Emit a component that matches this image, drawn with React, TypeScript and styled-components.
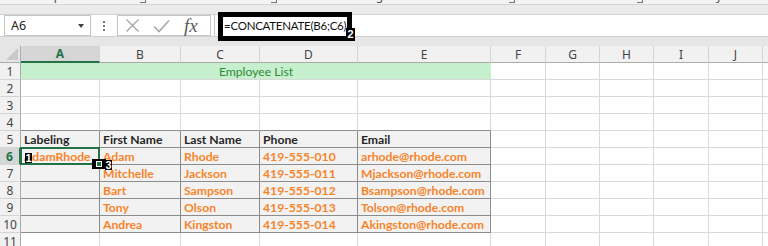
import styled, { createGlobalStyle, css } from 'styled-components'

const GlobalStyle = createGlobalStyle`
  html, body {
    margin: 0;
    padding: 0;
    background: #ffffff;
    overflow: hidden;
  }
  #root {
    width: 768px;
    height: 246px;
    overflow: hidden;
  }
`

const COLUMNS = ['A', 'B', 'C', 'D', 'E', 'F', 'G', 'H', 'I', 'J', '']
const GRID_TEMPLATE = '21px 79px 81px 79px 98px 133px 55px 54px 54px 55px 54px 1fr'

const Sheet = styled.div`
  width: 768px;
  height: 246px;
  display: flex;
  flex-direction: column;
  font-family: 'Noto Sans', 'Open Sans', sans-serif;
  background: #ffffff;
`

const RibbonStrip = styled.div`
  height: 4px;
  flex: none;
  display: flex;
  overflow: hidden;
  background: #f3f3f3;
  border-bottom: 1px solid #d5d5d5;
`

const GroupLabel = styled.div<{ $left: number }>`
  margin-left: ${(p) => p.$left}px;
  margin-top: -12px;
  height: 16px;
  line-height: 16px;
  font-size: 12px;
  color: #505050;
  white-space: nowrap;
`

const Launcher = styled.div<{ $left: number }>`
  margin-left: ${(p) => p.$left}px;
  margin-top: -1px;
  width: 5px;
  height: 3px;
  border-right: 1px solid #777;
  border-bottom: 1px solid #777;
  flex: none;
`

const RibbonEdge = styled.div`
  height: 9px;
  flex: none;
  background: #ebebeb;
  border-bottom: 1px solid #d0d0d0;
`

const FormulaBar = styled.div`
  position: relative;
  height: 21px;
  flex: none;
  display: flex;
  align-items: stretch;
  background: #ffffff;
  border-bottom: 1px solid #d0d0d0;
`

const NameBox = styled.div`
  margin-left: 4px;
  width: 87px;
  box-sizing: border-box;
  border: 1px solid #c6c6c6;
  display: flex;
  align-items: center;
  justify-content: space-between;
  padding: 0 6px 0 6px;
  font-size: 12.5px;
  color: #222;
`

const Caret = styled.span`
  width: 0;
  height: 0;
  border-left: 3px solid transparent;
  border-right: 3px solid transparent;
  border-top: 4px solid #444;
`

const Grip = styled.div`
  width: 26px;
  display: flex;
  flex-direction: column;
  align-items: center;
  justify-content: center;
  gap: 2px;
  span {
    width: 2px;
    height: 2px;
    background: #7a7a7a;
  }
`

const ButtonBox = styled.div`
  width: 94px;
  box-sizing: border-box;
  border: 1px solid #c6c6c6;
  display: flex;
  align-items: center;
  padding-left: 7px;
  gap: 13px;
`

const FxGlyph = styled.span`
  font-family: 'Liberation Serif', 'DejaVu Serif', serif;
  font-style: italic;
  font-size: 19px;
  color: #5a5a5a;
  line-height: 19px;
  margin-left: 1px;
`

const FormulaInput = styled.div`
  flex: 1;
  margin-left: 3px;
  box-sizing: border-box;
  border-left: 1px solid #c6c6c6;
  display: flex;
  align-items: center;
  padding-left: 9px;
  font-family: Lato, 'Noto Sans', sans-serif;
  font-size: 11.5px;
  letter-spacing: -0.25px;
  color: #111;
`

const FormulaHighlight = styled.div`
  position: absolute;
  left: 218px;
  top: -3px;
  width: 134px;
  height: 29px;
  box-sizing: border-box;
  border: 5px solid #000;
  pointer-events: none;
`

const Marker = styled.div<{ $left: number; $top: number; $w: number; $h: number }>`
  position: absolute;
  left: ${(p) => p.$left}px;
  top: ${(p) => p.$top}px;
  width: ${(p) => p.$w}px;
  height: ${(p) => p.$h}px;
  background: #000;
  color: #fff;
  font-family: 'Liberation Sans', Arial, sans-serif;
  font-weight: bold;
  font-size: 11px;
  line-height: ${(p) => p.$h}px;
  text-align: center;
  z-index: 3;
`

const HeaderGap = styled.div`
  height: 9px;
  flex: none;
  background: #e6e6e6;
`

const Grid = styled.div`
  display: grid;
  grid-template-columns: ${GRID_TEMPLATE};
  grid-auto-rows: 17px;
  flex: 1;
  overflow: hidden;
`

const Corner = styled.div`
  background: #e6e6e6;
  box-sizing: border-box;
  border-right: 1px solid #ababab;
  border-bottom: 1px solid #ababab;
  display: flex;
  align-items: flex-end;
  justify-content: flex-end;
  padding: 0 2px 2px 0;
`

const ColHeader = styled.div<{ $active?: boolean }>`
  box-sizing: border-box;
  background: ${(p) => (p.$active ? '#d6d6d6' : '#f1f1f1')};
  border-right: 1px solid #d4d4d4;
  border-bottom: ${(p) => (p.$active ? '2px solid #217346' : '1px solid #ababab')};
  display: flex;
  align-items: center;
  justify-content: center;
  font-size: 12px;
  color: ${(p) => (p.$active ? '#217346' : '#444')};
  font-weight: ${(p) => (p.$active ? 700 : 400)};
`

const RowHeader = styled.div<{ $active?: boolean }>`
  box-sizing: border-box;
  background: ${(p) => (p.$active ? '#d6d6d6' : '#f1f1f1')};
  border-right: ${(p) => (p.$active ? '2px solid #217346' : '1px solid #ababab')};
  border-bottom: 1px solid #d4d4d4;
  display: flex;
  align-items: center;
  justify-content: center;
  font-size: 12px;
  color: ${(p) => (p.$active ? '#217346' : '#444')};
  font-weight: ${(p) => (p.$active ? 700 : 400)};
`

type Tone = 'plain' | 'head' | 'data'

const Cell = styled.div<{ $table?: boolean; $tableTop?: boolean; $tone?: Tone }>`
  position: relative;
  box-sizing: border-box;
  border-right: 1px solid ${(p) => (p.$table ? '#8c8c8c' : '#d9d9d9')};
  border-bottom: 1px solid ${(p) => (p.$table || p.$tableTop ? '#8c8c8c' : '#d9d9d9')};
  background: ${(p) => (p.$table ? '#f2f2f2' : '#ffffff')};
  padding: 1px 3px 0;
  display: flex;
  align-items: center;
  white-space: nowrap;
  font-family: Lato, 'Noto Sans', sans-serif;
  font-size: 12.2px;
  font-weight: 700;
  ${(p) =>
    p.$tone === 'head' &&
    css`
      color: #262626;
    `}
  ${(p) =>
    p.$tone === 'data' &&
    css`
      color: #f7842a;
    `}
`

const TitleCell = styled.div`
  grid-column: span 5;
  box-sizing: border-box;
  border-bottom: 1px solid #d9d9d9;
  background: #c6efce;
  display: flex;
  align-items: center;
  justify-content: center;
  padding-top: 1px;
  font-family: Lato, 'Noto Sans', sans-serif;
  font-size: 12.2px;
  color: #2f8a35;
`

const Selection = styled.div`
  position: absolute;
  left: -1px;
  top: -1px;
  right: -1px;
  bottom: -1px;
  border: 2px solid #217346;
  pointer-events: none;
`

const HandleBox = styled.div`
  position: absolute;
  left: 71px;
  top: 11px;
  width: 14px;
  height: 10px;
  background: #000;
  display: flex;
  align-items: center;
  justify-content: center;
  z-index: 2;
  span {
    width: 4px;
    height: 4px;
    background: #217346;
    border: 1px solid #fff;
  }
`

const ribbonGroups = [
  { label: 'Clipboard', gap: 40, launcher: 45 },
  { label: 'Font', gap: 37, launcher: 63 },
  { label: 'Alignment', gap: 85, launcher: 89 },
  { label: 'Number', gap: 36, launcher: 39 },
  { label: 'Styles', gap: 62, launcher: 0 },
]

const tableRows: string[][] = [
  ['Labeling', 'First Name', 'Last Name', 'Phone', 'Email'],
  ['AdamRhode', 'Adam', 'Rhode', '419-555-010', 'arhode@rhode.com'],
  ['', 'Mitchelle', 'Jackson', '419-555-011', 'Mjackson@rhode.com'],
  ['', 'Bart', 'Sampson', '419-555-012', 'Bsampson@rhode.com'],
  ['', 'Tony', 'Olson', '419-555-013', 'Tolson@rhode.com'],
  ['', 'Andrea', 'Kingston', '419-555-014', 'Akingston@rhode.com'],
]

function CrossIcon() {
  return (
    <svg width='15' height='15' viewBox='0 0 15 15'>
      <path d='M1.5 1.5 L13.5 13.5 M13.5 1.5 L1.5 13.5' stroke='#a8a8a8' strokeWidth='1.4' fill='none' />
    </svg>
  )
}

function CheckIcon() {
  return (
    <svg width='17' height='14' viewBox='0 0 17 14'>
      <path d='M1 7.5 L6 12.5 L16 1.5' stroke='#a8a8a8' strokeWidth='1.6' fill='none' />
    </svg>
  )
}

function CornerTriangle() {
  return (
    <svg width='12' height='12' viewBox='0 0 12 12'>
      <path d='M12 0 L12 12 L0 12 Z' fill='#c8c8c8' />
    </svg>
  )
}

function BlankCells({ row, from }: { row: number; from: number }) {
  return (
    <>
      {COLUMNS.slice(from).map((c, i) => (
        <Cell key={`${row}-${from + i}`} />
      ))}
    </>
  )
}

export default function App() {
  return (
    <Sheet>
      <GlobalStyle />
      <RibbonStrip>
        {ribbonGroups.map((g) => (
          <>
            <GroupLabel key={g.label} $left={g.gap}>
              {g.label}
            </GroupLabel>
            {g.launcher > 0 && <Launcher key={`${g.label}-l`} $left={g.launcher} />}
          </>
        ))}
      </RibbonStrip>
      <RibbonEdge />
      <FormulaBar>
        <NameBox>
          A6
          <Caret />
        </NameBox>
        <Grip>
          <span />
          <span />
          <span />
        </Grip>
        <ButtonBox>
          <CrossIcon />
          <CheckIcon />
          <FxGlyph>fx</FxGlyph>
        </ButtonBox>
        <FormulaInput>=CONCATENATE(B6;C6)</FormulaInput>
        <FormulaHighlight />
        <Marker $left={346} $top={13} $w={9} $h={13}>
          2
        </Marker>
      </FormulaBar>
      <HeaderGap />
      <Grid>
        <Corner>
          <CornerTriangle />
        </Corner>
        {COLUMNS.map((c, i) => (
          <ColHeader key={`h${i}`} $active={c === 'A'}>
            {c}
          </ColHeader>
        ))}

        <RowHeader>1</RowHeader>
        <TitleCell>Employee List</TitleCell>
        <BlankCells row={1} from={5} />

        {[2, 3, 4].map((r) => (
          <>
            <RowHeader key={`r${r}`}>{r}</RowHeader>
            {COLUMNS.map((c, i) => (
              <Cell key={`${r}-${i}`} $tableTop={r === 4 && i < 5} />
            ))}
          </>
        ))}

        {tableRows.map((values, idx) => {
          const r = idx + 5
          return (
            <>
              <RowHeader key={`r${r}`} $active={r === 6}>
                {r}
              </RowHeader>
              {values.map((v, i) => (
                <Cell key={`${r}-${i}`} $table $tone={idx === 0 ? 'head' : 'data'}>
                  {v}
                  {r === 6 && i === 0 && (
                    <>
                      <Selection />
                      <Marker $left={4} $top={5} $w={7} $h={10}>
                        1
                      </Marker>
                      <HandleBox>
                        <span />
                      </HandleBox>
                      <Marker $left={84} $top={12} $w={7} $h={10}>
                        3
                      </Marker>
                    </>
                  )}
                </Cell>
              ))}
              <BlankCells row={r} from={5} />
            </>
          )
        })}

        <RowHeader>11</RowHeader>
        <BlankCells row={11} from={0} />
      </Grid>
    </Sheet>
  )
}
